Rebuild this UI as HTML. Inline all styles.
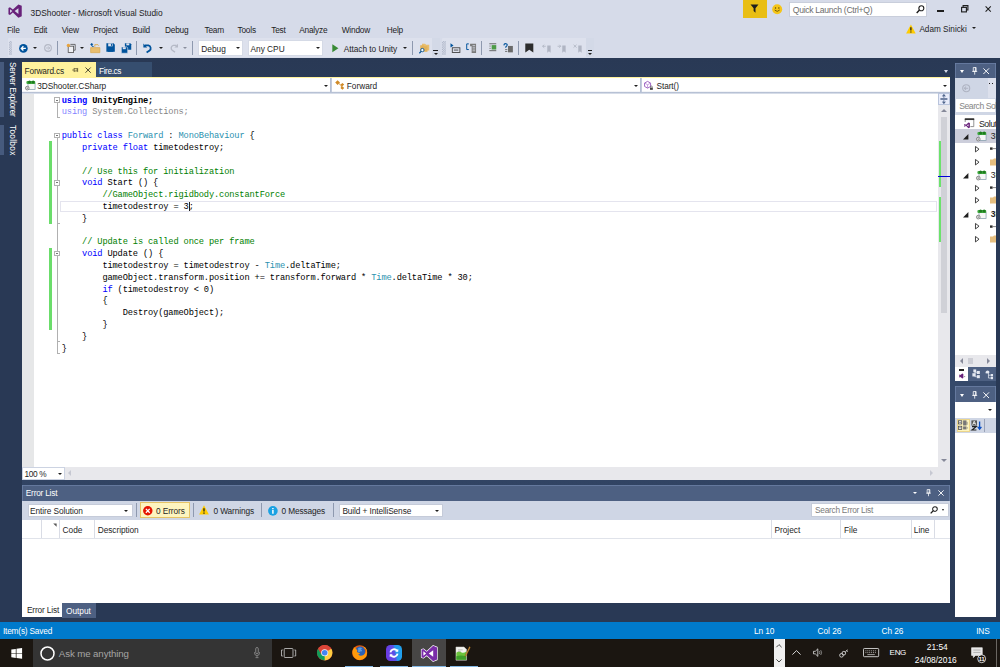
<!DOCTYPE html>
<html><head><meta charset="utf-8"><title>3DShooter - Microsoft Visual Studio</title>
<style>
*{box-sizing:border-box;margin:0;padding:0}
html,body{width:1000px;height:667px;overflow:hidden}
body{position:relative;background:#D6DBE9;font-family:"Liberation Sans",sans-serif;font-size:8.3px;color:#1e1e1e}
.a{position:absolute}
.t{position:absolute;white-space:pre;line-height:12px;height:12px}
.w{color:#fff}
.sep{position:absolute;width:0.9px;background:#8E99AF}
.dd{position:absolute;width:0;height:0;border-left:2.2px solid transparent;border-right:2.2px solid transparent;border-top:2.6px solid #1e1e1e}
svg{position:absolute;overflow:visible}
/* code */
.c{position:absolute;left:61.8px;white-space:pre;font-family:"Liberation Mono",monospace;font-size:8.7px;letter-spacing:-0.14px;height:11.81px;line-height:11.81px;color:#000}
.k{color:#0000ff}.y{color:#2b91af}.g{color:#008000}
.ob{position:absolute;left:54.2px;width:5.8px;height:5.8px;border:0.8px solid #b2b2b2;background:#fff}
.ob:after{content:"";position:absolute;left:0.8px;right:0.8px;top:1.7px;height:0.8px;background:#777}
.ol{position:absolute;background:#b0b0b0}
.gb{position:absolute;left:48.55px;width:3.6px;background:#6BDD6B}
.grip{width:3.6px;height:14px;background-image:linear-gradient(45deg,#a9b1c4 25%,transparent 25%,transparent 75%,#a9b1c4 75%),linear-gradient(45deg,#a9b1c4 25%,transparent 25%,transparent 75%,#a9b1c4 75%);background-size:1.8px 1.8px;background-position:0 0,0.9px 0.9px}
.vt{writing-mode:vertical-rl;height:auto;width:12px;line-height:12px;transform:translateX(-100%)}
.hs{top:520px;width:0.8px;height:18.4px;background:#D9DCE5}
.ul{top:665.5px;height:1.5px;background:#85B9E6}
</style></head><body>
<!-- TITLE BAR -->
<div id="title">
<svg class="a" style="left:8px;top:4.1px" width="14.2" height="14.2" viewBox="0 0 32 32"><path fill="#68217A" d="M23.5 1 L31 4.2 V27.8 L23.5 31 L11 19.4 L4.4 24.6 L1 23 V9 L4.4 7.4 L11 12.6 Z M23.5 9.6 L15 16 L23.5 22.4 Z M4.6 11.8 V20.2 L9.8 16 Z"/></svg>
<div class="t" style="left:30.6px;top:6.7px;font-size:8.35px">3DShooter - Microsoft Visual Studio</div>

<!-- title right -->
<div class="a" style="left:743px;top:0;width:23.8px;height:17.7px;background:#E9BE14"></div>
<svg style="left:750.4px;top:4.3px" width="9" height="9" viewBox="0 0 10 10"><path fill="#1e1e1e" d="M0.6 0.6 H9.4 L6.1 4.6 V9.6 L4 7.8 V4.6 Z"/></svg>
<svg style="left:771.7px;top:4.1px" width="10.4" height="10.4" viewBox="0 0 10 10"><circle cx="5" cy="5" r="4.8" fill="#F5C518"/><circle cx="3.4" cy="3.8" r="0.7" fill="#5b4a00"/><circle cx="6.6" cy="3.8" r="0.7" fill="#5b4a00"/><path d="M2.6 5.8 Q5 8.4 7.4 5.8" stroke="#5b4a00" stroke-width="0.8" fill="none"/></svg>
<div class="a" style="left:789.4px;top:2px;width:138px;height:15.2px;background:#fff;border:0.6px solid #C9CEDB"></div>
<div class="t" style="left:792.8px;top:3.9px;color:#6d6d6d;font-size:8.6px;letter-spacing:-0.3px">Quick Launch (Ctrl+Q)</div>
<svg style="left:915.6px;top:5.2px" width="8.6" height="8.6" viewBox="0 0 10 10"><circle cx="6.2" cy="3.8" r="2.9" stroke="#1e1e1e" stroke-width="1.3" fill="none"/><path d="M4.1 5.9 L0.8 9.2" stroke="#1e1e1e" stroke-width="1.7"/></svg>
<div class="a" style="left:937.4px;top:9.9px;width:6.6px;height:2.2px;background:#1e1e1e"></div>
<svg style="left:960.8px;top:5.3px" width="7.5" height="7.5" viewBox="0 0 10 10"><path d="M2.8 2.6 V0.8 H9.2 V6.6 H7.2" stroke="#1e1e1e" stroke-width="1.5" fill="none"/><rect x="0.8" y="3.2" width="6.4" height="6" stroke="#1e1e1e" stroke-width="1.5" fill="none"/></svg>
<svg style="left:985px;top:6.4px" width="6.4" height="6.2" viewBox="0 0 10 10"><path d="M0.8 0.8 L9.2 9.2 M9.2 0.8 L0.8 9.2" stroke="#1e1e1e" stroke-width="1.7"/></svg>
<!-- account -->
<svg style="left:905.8px;top:23.5px" width="9.8" height="10" viewBox="0 0 10 10"><path d="M5 0.3 L9.9 9.6 H0.1 Z" fill="#FFCC00"/><path d="M5 3.2 V6.6 M5 7.5 V8.7" stroke="#1e1e1e" stroke-width="1.3"/></svg>
<div class="t" style="left:919.4px;top:24.3px;font-size:8.2px">Adam Sinicki</div>
<div class="dd" style="left:972.3px;top:26.6px"></div>
<!-- MENU -->
<div class="t" style="left:7px;top:23.7px;letter-spacing:-0.2px">File</div>
<div class="t" style="left:33.7px;top:23.7px;letter-spacing:-0.2px">Edit</div>
<div class="t" style="left:61.7px;top:23.7px;letter-spacing:-0.2px">View</div>
<div class="t" style="left:93.3px;top:23.7px;letter-spacing:-0.2px">Project</div>
<div class="t" style="left:132.5px;top:23.7px;letter-spacing:-0.2px">Build</div>
<div class="t" style="left:165px;top:23.7px;letter-spacing:-0.2px">Debug</div>
<div class="t" style="left:204.5px;top:23.7px;letter-spacing:-0.2px">Team</div>
<div class="t" style="left:237.5px;top:23.7px;letter-spacing:-0.2px">Tools</div>
<div class="t" style="left:271.2px;top:23.7px;letter-spacing:-0.2px">Test</div>
<div class="t" style="left:299.2px;top:23.7px;letter-spacing:-0.2px">Analyze</div>
<div class="t" style="left:341.7px;top:23.7px;letter-spacing:-0.2px">Window</div>
<div class="t" style="left:386.7px;top:23.7px;letter-spacing:-0.2px">Help</div>
<!-- TOOLBAR -->
<div class="a" style="left:7.5px;top:38.4px;width:432px;height:18.8px;background:#DDE1ED;border-radius:1px"></div>
<div class="a" style="left:441.5px;top:38.4px;width:152.5px;height:18.8px;background:#DDE1ED;border-radius:1px"></div>
<div class="a grip" style="left:8.8px;top:40.6px"></div>
<div class="a grip" style="left:442.4px;top:40.6px"></div>

<!-- toolbar 1 icons -->
<svg style="left:19.4px;top:43.6px" width="8.8" height="8.8" viewBox="0 0 10 10"><circle cx="5" cy="5" r="4.9" fill="#00539C"/><path d="M7.8 5 H3 M5 2.6 L2.6 5 L5 7.4" stroke="#fff" stroke-width="1.5" fill="none"/></svg>
<div class="dd" style="left:33px;top:47px"></div>
<svg style="left:43.6px;top:44px" width="8" height="8" viewBox="0 0 10 10"><circle cx="5" cy="5" r="4.2" fill="none" stroke="#b5b9c6" stroke-width="1.4"/><path d="M2.6 5 H7 M5.2 3 L7.2 5 L5.2 7" stroke="#b5b9c6" stroke-width="1.2" fill="none"/></svg>
<div class="sep" style="left:57.3px;top:41px;height:14px"></div>
<svg style="left:65.5px;top:43px" width="10" height="10" viewBox="0 0 10 10"><rect x="2.2" y="3.2" width="5.4" height="6.2" fill="#f0f1f5" stroke="#505050" stroke-width="0.8"/><path d="M4.4 1.4 H9.2 V7.2 H7.8" stroke="#505050" stroke-width="0.8" fill="none"/><circle cx="2.4" cy="2.4" r="1.7" fill="#E8A33D"/></svg>
<div class="dd" style="left:80.4px;top:47px"></div>
<svg style="left:90px;top:43px" width="10.5" height="10.5" viewBox="0 0 10 10"><path d="M0.6 4.4 H9.4 V9.2 H0.6 Z" fill="#E9BE6E" stroke="#D9A441" stroke-width="0.6"/><path d="M4.6 3.6 V1.6 H7.6 L8.4 2.6" fill="none" stroke="#D9A441" stroke-width="0.8"/><path d="M3.4 3.4 Q1.2 3 1.6 1 M0.6 1.8 L1.6 0.6 L2.8 1.6" stroke="#00539C" stroke-width="1" fill="none"/></svg>
<svg style="left:105.6px;top:43.4px" width="9.2" height="9.2" viewBox="0 0 10 10"><path d="M0.4 0.4 H8.2 L9.6 1.8 V9.6 H0.4 Z" fill="#00539C"/><rect x="2.4" y="0.4" width="4.8" height="3.2" fill="#DDE1ED"/><rect x="5.4" y="0.9" width="1.1" height="2.2" fill="#00539C"/><rect x="2" y="5.6" width="6" height="4" fill="#00539C"/></svg>
<svg style="left:120.6px;top:43px" width="10.6" height="10.6" viewBox="0 0 12 12"><path d="M4.4 0.4 H10.6 L11.6 1.4 V7.6 H4.4 Z" fill="#00539C"/><rect x="6" y="0.4" width="3.4" height="2.2" fill="#DDE1ED"/><path d="M0.4 4.4 H6.6 L7.6 5.4 V11.6 H0.4 Z" fill="#00539C" stroke="#DDE1ED" stroke-width="0.7"/><rect x="2" y="4.8" width="3.4" height="2.2" fill="#DDE1ED"/></svg>
<div class="sep" style="left:136px;top:41px;height:14px"></div>
<svg style="left:143.4px;top:43px" width="10" height="10" viewBox="0 0 10 10"><path d="M2 2.4 H5.4 A3 3 0 0 1 6.6 7.6 L3.6 9.6" stroke="#00539C" stroke-width="1.8" fill="none"/><path d="M0.4 0.6 V4.6 H4.2 Z" fill="#00539C"/></svg>
<div class="dd" style="left:158.6px;top:47px"></div>
<svg style="left:168.6px;top:43.2px" width="9.4" height="9.6" viewBox="0 0 10 10"><path d="M8 2.4 H4.6 A3 3 0 0 0 3.4 7.6 L6.4 9.6" stroke="#b5b9c6" stroke-width="1.5" fill="none"/><path d="M9.6 0.6 V4.6 H5.8 Z" fill="#b5b9c6"/></svg>
<div class="dd" style="left:182.8px;top:47px;border-top-color:#8a8f9d"></div>
<div class="sep" style="left:192.3px;top:41px;height:14px"></div>
<div class="a" style="left:198.3px;top:40.2px;width:44.6px;height:15.5px;background:#fff;border:0.6px solid #D5DAE6"></div>
<div class="t" style="left:201.3px;top:42.9px">Debug</div>
<div class="dd" style="left:235.8px;top:47px"></div>
<div class="a" style="left:248.3px;top:40.2px;width:75px;height:15.5px;background:#fff;border:0.6px solid #D5DAE6"></div>
<div class="t" style="left:250.5px;top:42.9px">Any CPU</div>
<div class="dd" style="left:316px;top:47px"></div>
<svg style="left:331.6px;top:43.6px" width="6.6" height="8.4" viewBox="0 0 8 10"><path d="M0.4 0.2 L7.8 5 L0.4 9.8 Z" fill="#388A34"/></svg>
<div class="t" style="left:343.7px;top:42.9px;letter-spacing:-0.03px">Attach to Unity</div>
<div class="dd" style="left:403.3px;top:47px"></div>
<div class="sep" style="left:411.8px;top:41px;height:14px"></div>
<svg style="left:418.6px;top:43px" width="10.6" height="10.6" viewBox="0 0 12 12"><path d="M3.4 0.8 H7 L8 2 H11.6 V8.4 H3.4 Z" fill="#E9BE6E"/><path d="M1.4 2.6 H5 L6 3.8 H9.6 V10 H1.4 Z" fill="#E2B25A"/><circle cx="3.8" cy="8" r="1.9" fill="#fff" stroke="#00539C" stroke-width="1"/><path d="M2.4 9.4 L0.4 11.6" stroke="#00539C" stroke-width="1.3"/></svg>
<div class="a" style="left:432px;top:38.4px;width:7.5px;height:18.8px;background:#D3D9E7"></div><div class="a" style="left:433.3px;top:50.3px;width:4.8px;height:1.1px;background:#1e1e1e"></div><div class="dd" style="left:433.5px;top:52.6px"></div>
<!-- toolbar 2 icons -->
<svg style="left:450px;top:43px" width="10.6" height="10.6" viewBox="0 0 12 12"><path d="M0.6 0.4 V5 L4 2.8 Z" fill="#00539C"/><rect x="2.6" y="5.4" width="8.6" height="5.4" fill="none" stroke="#424242" stroke-width="1"/><path d="M4.4 8 H9.4" stroke="#424242" stroke-width="1"/></svg>
<svg style="left:465.6px;top:43px" width="10.6" height="10.6" viewBox="0 0 12 12"><path d="M3.2 1 H0.8 V7.4 H3.2" fill="none" stroke="#00539C" stroke-width="1.1"/><path d="M4.6 0.8 H11.4 V11.2 H6.4 V3.6 H4.6 Z" fill="#7a7a7a"/><path d="M7.4 2.8 H10.4 M7.4 4.8 H10.4 M7.4 6.8 H10.4 M7.4 8.8 H10.4" stroke="#DDE1ED" stroke-width="0.8"/></svg>
<div class="sep" style="left:481px;top:41px;height:14px"></div>
<svg style="left:488.2px;top:43.4px" width="9.6" height="9.6" viewBox="0 0 10 10"><path d="M1.4 0.8 H8.6 M1.4 8 H8.6" stroke="#555" stroke-width="0.9"/><rect x="3.8" y="2.2" width="4.8" height="4.6" fill="#4C9A46"/><path d="M1.4 3.2 H3 M1.4 5.6 H3" stroke="#777" stroke-width="0.8"/></svg>
<svg style="left:503.4px;top:43px" width="10.4" height="10.4" viewBox="0 0 12 12"><path d="M1 2.8 Q1.2 0.6 3.4 0.8 Q5.4 1.2 4.6 3 L3.2 4.6 V5.6" stroke="#00539C" stroke-width="1.3" fill="none"/><rect x="5.8" y="3.4" width="5.6" height="7.4" fill="#6a6a6a"/><path d="M2.4 7.6 H5 M2.4 9.8 H5" stroke="#6a6a6a" stroke-width="1"/></svg>
<div class="sep" style="left:518px;top:41px;height:14px"></div>
<svg style="left:524.8px;top:43.2px" width="8.6" height="9.8" viewBox="0 0 9 10"><path d="M0.3 0.3 H8.7 V9.7 L4.5 7 L0.3 9.7 Z" fill="#2d2d2d"/></svg>
<svg class="gic" style="left:541.6px;top:43.6px" width="9.4" height="9.4" viewBox="0 0 10 10"><path d="M0.6 2.4 H4 M2.4 0.8 L0.6 2.4 L2.4 4" stroke="#b0b5c3" stroke-width="0.9" fill="none"/><path d="M5.6 1.6 V9.2 L7.4 7.8 L9.2 9.2 V1.6 Z" fill="#b0b5c3"/></svg>
<svg class="gic" style="left:557.4px;top:43.6px" width="9.4" height="9.4" viewBox="0 0 10 10"><path d="M0.6 2.4 H4 M2.4 0.8 L4 2.4 L2.4 4" stroke="#b0b5c3" stroke-width="0.9" fill="none"/><path d="M5.6 1.6 V9.2 L7.4 7.8 L9.2 9.2 V1.6 Z" fill="#b0b5c3"/></svg>
<svg class="gic" style="left:573px;top:43.6px" width="9.4" height="9.4" viewBox="0 0 10 10"><path d="M0.6 0.8 L3.8 3.8 M3.8 0.8 L0.6 3.8" stroke="#b0b5c3" stroke-width="0.9" fill="none"/><path d="M5.6 1.6 V9.2 L7.4 7.8 L9.2 9.2 V1.6 Z" fill="#b0b5c3"/></svg>
<div class="a" style="left:586.4px;top:38.4px;width:7.6px;height:18.8px;background:#D3D9E7"></div><div class="a" style="left:587.7px;top:50.3px;width:4.8px;height:1.1px;background:#1e1e1e"></div><div class="dd" style="left:587.9px;top:52.6px"></div>
</div>

<!-- NAVY FRAME -->
<div class="a" style="left:0;top:58px;width:1000px;height:564px;background:linear-gradient(#293955 0%,#2B3C59 10%,#35496A 42%,#35496A 64%,#293955 97%)"></div>
<div class="a" style="left:0;top:58px;width:22px;height:564px;background:#293955"></div>
<div class="a" style="left:995.5px;top:58px;width:4.5px;height:564px;background:#293955"></div>
<!-- left autohide strip -->
<div class="a" style="left:0;top:62.3px;width:4.2px;height:55.2px;background:#465A7D"></div>
<div class="a" style="left:0;top:125.4px;width:4.2px;height:29.4px;background:#465A7D"></div>
<div class="t w vt" style="left:18.8px;top:62px;letter-spacing:-0.2px">Server Explorer</div>
<div class="t w vt" style="left:18.8px;top:124.8px;letter-spacing:0.28px">Toolbox</div>
<!-- doc tabs -->
<div class="a" style="left:22px;top:62.4px;width:74px;height:15px;background:#FFF29D"></div>
<div class="t" style="left:24.6px;top:64.9px;letter-spacing:-0.17px">Forward.cs</div>
<svg style="left:71.6px;top:67.4px" width="6" height="6" viewBox="0 0 10 10"><path d="M0.4 5 H3.6 M3.6 1.6 V8.4 M3.6 2.8 H8.6 V6.6 H3.6 M9.4 1.6 V8.4" stroke="#5a5330" stroke-width="1.3" fill="none"/></svg>
<svg style="left:84.6px;top:67.2px" width="6.2" height="6.2" viewBox="0 0 10 10"><path d="M0.8 0.8 L9.2 9.2 M9.2 0.8 L0.8 9.2" stroke="#3b3b2a" stroke-width="1.5"/></svg>
<div class="a" style="left:96px;top:62.4px;width:56.4px;height:14.4px;background:#364E6F"></div>
<div class="t w" style="left:99px;top:64.9px;letter-spacing:-0.4px">Fire.cs</div>
<div class="a" style="left:22px;top:76.5px;width:928.2px;height:1.7px;background:#FFF29D"></div>
<div class="dd" style="left:944.2px;top:70.4px;border-top-color:#D6DBE9;border-left-width:2.6px;border-right-width:2.6px;border-top-width:3px"></div>
<!-- nav bar -->
<div class="a" style="left:22px;top:78.2px;width:928.2px;height:15.9px;background:linear-gradient(#fff 0,#fff 13.4px,#B4BED2 14px,#B9C3D6 14.8px,#E6EAF2 15.9px)"></div>
<div class="a" style="left:330px;top:78.2px;width:2.2px;height:13.6px;background:linear-gradient(90deg,#AEB9CF,#C9D1E1)"></div>
<div class="a" style="left:639.9px;top:78.2px;width:2.2px;height:13.6px;background:linear-gradient(90deg,#AEB9CF,#C9D1E1)"></div>
<svg style="left:24.6px;top:80px" width="10.6" height="10.6" viewBox="0 0 12 12"><rect x="3.4" y="4" width="8" height="6.6" fill="#f7f7f7" stroke="#7f9aa8" stroke-width="0.8"/><rect x="1.6" y="1" width="10" height="3.6" rx="1.2" fill="#3DA83D"/><circle cx="5.2" cy="2.2" r="1.7" fill="#1F7A1F"/><circle cx="9.2" cy="2.2" r="1.7" fill="#1F7A1F"/><circle cx="2.6" cy="9.2" r="2.1" fill="#e4e4e4" stroke="#6a6a6a" stroke-width="0.8"/><circle cx="2.6" cy="9.2" r="0.7" fill="#6a6a6a"/></svg>
<div class="t" style="left:37.2px;top:79.8px;letter-spacing:-0.04px">3DShooter.CSharp</div>
<div class="dd" style="left:324.3px;top:84.6px"></div>
<svg style="left:335px;top:80.4px" width="10" height="10" viewBox="0 0 10 10"><path d="M0.2 2.6 L2.6 0.2 L5 2.6 L2.6 5 Z" fill="#D08A28"/><path d="M4 3.6 L6.2 5.6 M6.4 5 V8.6" stroke="#D08A28" stroke-width="0.9" fill="none"/><path d="M5.6 4.6 L7.4 2.9 L9.2 4.6 L7.4 6.3 Z M5.6 8 L7.4 6.3 L9.2 8 L7.4 9.7 Z" fill="#D08A28"/></svg>
<div class="t" style="left:346.8px;top:79.8px">Forward</div>
<div class="dd" style="left:633.6px;top:84.6px"></div>
<svg style="left:644.4px;top:80.6px" width="9.4" height="9.4" viewBox="0 0 10 10"><path d="M3.8 0.4 L7 2.2 V5.8 L3.8 7.6 L0.6 5.8 V2.2 Z" fill="none" stroke="#9457BD" stroke-width="0.95"/><path d="M0.8 2.2 L3.8 4 L7 2.2 M3.8 4 V7.4" stroke="#A970CC" stroke-width="0.7" fill="none"/><rect x="6.4" y="7" width="3" height="2.4" fill="#444"/><path d="M7 7 V6.2 A0.9 0.9 0 0 1 8.8 6.2 V7" stroke="#444" stroke-width="0.6" fill="none"/></svg>
<div class="t" style="left:656.5px;top:79.8px;letter-spacing:-0.1px">Start()</div>
<div class="dd" style="left:942.8px;top:84.6px"></div>
<!-- EDITOR -->
<div class="a" style="left:22px;top:94.1px;width:916.4px;height:373.1px;background:#fff"></div>
<div class="a" style="left:22px;top:94.1px;width:12.2px;height:373.1px;background:#E6E7E8"></div>
<!-- CODE -->
<div class="a" style="left:60.2px;top:200.5px;width:876.6px;height:11.3px;border:1px solid #E4E4EE"></div>
<div class="c" style="top:95.66px"><b><span class="k">using</span> UnityEngine;</b></div>
<div class="c" style="top:107.47px"><span style="opacity:.5"><span class="k">using</span> System.Collections;</span></div>
<div class="c" style="top:131.09px"><span class="k">public</span> <span class="k">class</span> <span class="y">Forward</span> : <span class="y">MonoBehaviour</span> {</div>
<div class="c" style="top:142.90px">    <span class="k">private</span> <span class="k">float</span> timetodestroy;</div>
<div class="c" style="top:166.52px">    <span class="g">// Use this for initialization</span></div>
<div class="c" style="top:178.33px">    <span class="k">void</span> Start () {</div>
<div class="c" style="top:190.14px">        <span class="g">//GameObject.rigidbody.constantForce</span></div>
<div class="c" style="top:201.95px">        timetodestroy = 3;</div>
<div class="c" style="top:213.76px">    }</div>
<div class="c" style="top:237.38px">    <span class="g">// Update is called once per frame</span></div>
<div class="c" style="top:249.19px">    <span class="k">void</span> Update () {</div>
<div class="c" style="top:261.00px">        timetodestroy = timetodestroy - <span class="y">Time</span>.deltaTime;</div>
<div class="c" style="top:272.81px">        gameObject.transform.position += transform.forward * <span class="y">Time</span>.deltaTime * 30;</div>
<div class="c" style="top:284.62px">        <span class="k">if</span> (timetodestroy &lt; 0)</div>
<div class="c" style="top:296.43px">        {</div>
<div class="c" style="top:308.24px">            Destroy(gameObject);</div>
<div class="c" style="top:320.05px">        }</div>
<div class="c" style="top:331.86px">    }</div>
<div class="c" style="top:343.67px">}</div>
<div class="ol" style="left:57px;top:102.90px;width:0.8px;height:14.51px"></div><div class="ol" style="left:57px;top:116.61px;width:3.2px;height:0.8px"></div>
<div class="ol" style="left:57px;top:138.33px;width:0.8px;height:215.27px"></div><div class="ol" style="left:57px;top:352.80px;width:3.2px;height:0.8px"></div>
<div class="ol" style="left:57px;top:222.80px;width:3.2px;height:0.8px"></div>
<div class="ol" style="left:57px;top:341.00px;width:3.2px;height:0.8px"></div>
<div class="ob" style="top:97.10px"></div>
<div class="ob" style="top:132.53px"></div>
<div class="ob" style="top:179.77px"></div>
<div class="ob" style="top:250.63px"></div>
<div class="gb" style="top:141.3px;height:82.40px"></div>
<div class="gb" style="top:247.5px;height:82.20px"></div>
<div class="a" style="left:188.7px;top:201.8px;width:0.8px;height:8.8px;background:#222"></div>
<!-- /CODE -->
<!-- editor v scrollbar -->
<div class="a" style="left:938.4px;top:93.3px;width:11.8px;height:373.9px;background:#E8E8EC"></div>
<div class="a" style="left:938.4px;top:93.3px;width:11.8px;height:12.2px;background:#E8ECFA;border:0.6px solid #B9C4DC"></div>
<svg style="left:940.4px;top:94.4px" width="7.8" height="10" viewBox="0 0 8 10"><path d="M0.4 5 H7.6" stroke="#1F3A68" stroke-width="1.2"/><path d="M4 0.6 V3.6 M2.4 2 L4 0.6 L5.6 2 M4 9.4 V6.4 M2.4 8 L4 9.4 L5.6 8" stroke="#1F3A68" stroke-width="0.9" fill="none"/></svg>
<div class="a" style="left:940.7px;top:109.4px;width:0;height:0;border-left:3.1px solid transparent;border-right:3.1px solid transparent;border-bottom:3.5px solid #868999"></div>
<div class="a" style="left:940.7px;top:459.3px;width:0;height:0;border-left:3.1px solid transparent;border-right:3.1px solid transparent;border-top:3.5px solid #868999"></div>
<div class="a" style="left:941.2px;top:117px;width:5.8px;height:195.6px;background:#D0D1D7"></div>
<div class="a" style="left:938.5px;top:141px;width:2.8px;height:45.5px;background:#6CE26C"></div>
<div class="a" style="left:938.5px;top:197.2px;width:2.8px;height:45px;background:#6CE26C"></div>
<div class="a" style="left:937.6px;top:176.1px;width:12.6px;height:1px;background:#0000D8"></div>
<!-- editor bottom bar -->
<div class="a" style="left:22px;top:467.2px;width:928.2px;height:12.4px;background:#E8E8EC"></div>
<div class="a" style="left:22px;top:467.2px;width:42.8px;height:12.4px;background:#fff;border:0.6px solid #CCD3E2"></div>
<div class="t" style="left:24.4px;top:467.6px;letter-spacing:-0.3px">100 %</div>
<div class="dd" style="left:58px;top:472.6px"></div>
<div class="a" style="left:68.2px;top:470px;width:0;height:0;border-top:3.3px solid transparent;border-bottom:3.3px solid transparent;border-right:3.6px solid #C6C8D2"></div>
<div class="a" style="left:930px;top:470px;width:0;height:0;border-top:3.3px solid transparent;border-bottom:3.3px solid transparent;border-left:3.6px solid #C6C8D2"></div>

<!-- SOLUTION EXPLORER -->
<div class="a" style="left:955px;top:62.8px;width:40.5px;height:318.6px;background:#fff;overflow:hidden" id="se"></div>
<div class="a" style="left:955px;top:62.8px;width:40.5px;height:15.6px;background:#4D6082;box-shadow:inset 0.8px 0.8px 0 #6C80A6,inset -0.8px 0 0 #6C80A6"></div>
<div class="a" style="left:959.7px;top:69.6px;width:0;height:0;border-left:2.8px solid transparent;border-right:2.8px solid transparent;border-top:3px solid #fff"></div>
<svg style="left:971.6px;top:66.8px" width="5.4" height="8" viewBox="0 0 6 9"><path d="M1.4 0.6 H4.6 V4.8 H1.4 Z M3.8 0.6 V4.8 M0.2 5 H5.8 M3 5 V8.6" stroke="#fff" stroke-width="0.9" fill="none"/></svg>
<svg style="left:983.4px;top:67.6px" width="6.4" height="6.4" viewBox="0 0 10 10"><path d="M0.6 0.6 L9.4 9.4 M9.4 0.6 L0.6 9.4" stroke="#fff" stroke-width="1.5"/></svg>
<div class="a" style="left:955px;top:78.4px;width:40.5px;height:36.6px;background:#CFD6E5"></div>
<div class="a" style="left:988px;top:78.4px;width:8px;height:19.2px;background:#DCE0EC"></div>
<svg style="left:962px;top:84.2px" width="8.4" height="8.4" viewBox="0 0 10 10"><circle cx="5" cy="5" r="4.2" fill="none" stroke="#aeb3c2" stroke-width="1.3"/><path d="M7.4 5 H3 M4.8 3 L2.8 5 L4.8 7" stroke="#aeb3c2" stroke-width="1.2" fill="none"/></svg>
<div class="a" style="left:989.2px;top:82.8px;width:1.3px;height:1.3px;background:#1e1e1e"></div><div class="a" style="left:991.8px;top:82.8px;width:1.3px;height:1.3px;background:#1e1e1e"></div>
<div class="a" style="left:956px;top:98.9px;width:38.8px;height:13.2px;background:#fff"></div>
<div class="a" style="left:956.2px;top:98.8px;width:39.8px;height:13.8px;overflow:hidden"><div class="t" style="left:3px;top:0.9px;color:#858585;font-size:8.6px;letter-spacing:-0.45px">Search Solution Explorer</div></div>
<svg style="left:964.2px;top:118.2px" width="10.4" height="10.4" viewBox="0 0 10.4 10.4"><path d="M1.2 4 V0.9 H9.8 V8.6 H6.4" fill="none" stroke="#777" stroke-width="0.8"/><path d="M0.8 1.2 H10.2" stroke="#333" stroke-width="1.7"/><g transform="translate(0,4.3) scale(0.19)"><path fill="#68217A" d="M23.5 1 L31 4.2 V27.8 L23.5 31 L10.5 18.6 L4 23.6 L1 22.2 V9.8 L4 8.4 L10.5 13.4 Z M23.5 10.2 L15.6 16 L23.5 21.8 Z M4 12.6 V19.4 L7.6 16 Z"/></g></svg>
<div class="a" style="left:955px;top:118px;width:40.5px;height:12px;overflow:hidden"><div class="t" style="left:23.9px;top:-0.3px;font-size:8.8px;letter-spacing:-0.45px">Solution</div></div>
<div class="a" style="left:955px;top:129.4px;width:40.5px;height:13.2px;background:#CCCEDB"></div>
<div class="a" style="left:955px;top:125px;width:40.5px;height:125px;overflow:hidden"><div class="a" style="left:-955px;top:-125px;width:1000px;height:300px"><svg style="left:962.8px;top:133.6px" width="5.4" height="5.4" viewBox="0 0 5 5"><path d="M5 0 V5 H0 Z" fill="#1e1e1e"/></svg><svg style="left:976.4px;top:130.6px" width="10.6" height="10.6" viewBox="0 0 12 12"><rect x="3.4" y="4" width="8" height="6.6" fill="#f7f7f7" stroke="#7f9aa8" stroke-width="0.8"/><rect x="1.6" y="1" width="10" height="3.6" rx="1.2" fill="#3DA83D"/><circle cx="5.2" cy="2.2" r="1.7" fill="#1F7A1F"/><circle cx="9.2" cy="2.2" r="1.7" fill="#1F7A1F"/><circle cx="2.6" cy="9.2" r="2.1" fill="#e4e4e4" stroke="#6a6a6a" stroke-width="0.8"/><circle cx="2.6" cy="9.2" r="0.7" fill="#6a6a6a"/></svg><div class="t" style="left:990.8px;top:130.2px;font-size:8.6px">3DShooter</div><svg style="left:975.4px;top:145.60000000000002px" width="4.6" height="6.4" viewBox="0 0 5 7"><path d="M0.5 0.5 L4.4 3.5 L0.5 6.5 Z" fill="#fff" stroke="#2a2a2a" stroke-width="0.95"/></svg><svg style="left:989.6px;top:147.20000000000002px" width="6" height="3.2" viewBox="0 0 6 3.2"><rect x="0" y="0.4" width="2.6" height="2.4" fill="#2d2d2d"/><path d="M2.6 1.6 H6" stroke="#666" stroke-width="0.8"/></svg><svg style="left:975.4px;top:158.60000000000002px" width="4.6" height="6.4" viewBox="0 0 5 7"><path d="M0.5 0.5 L4.4 3.5 L0.5 6.5 Z" fill="#fff" stroke="#2a2a2a" stroke-width="0.95"/></svg><svg style="left:990px;top:157.8px" width="6" height="8" viewBox="0 0 6 8"><path d="M0 1.6 H3 L4 0.4 H6 V7.6 H0 Z" fill="#E5BE7F"/></svg><svg style="left:962.8px;top:172.6px" width="5.4" height="5.4" viewBox="0 0 5 5"><path d="M5 0 V5 H0 Z" fill="#1e1e1e"/></svg><svg style="left:976.4px;top:169.6px" width="10.6" height="10.6" viewBox="0 0 12 12"><rect x="3.4" y="4" width="8" height="6.6" fill="#f7f7f7" stroke="#7f9aa8" stroke-width="0.8"/><rect x="1.6" y="1" width="10" height="3.6" rx="1.2" fill="#3DA83D"/><circle cx="5.2" cy="2.2" r="1.7" fill="#1F7A1F"/><circle cx="9.2" cy="2.2" r="1.7" fill="#1F7A1F"/><circle cx="2.6" cy="9.2" r="2.1" fill="#e4e4e4" stroke="#6a6a6a" stroke-width="0.8"/><circle cx="2.6" cy="9.2" r="0.7" fill="#6a6a6a"/></svg><div class="t" style="left:990.8px;top:169.2px;font-size:8.6px">3DShooter</div><svg style="left:975.4px;top:184.60000000000002px" width="4.6" height="6.4" viewBox="0 0 5 7"><path d="M0.5 0.5 L4.4 3.5 L0.5 6.5 Z" fill="#fff" stroke="#2a2a2a" stroke-width="0.95"/></svg><svg style="left:989.6px;top:186.20000000000002px" width="6" height="3.2" viewBox="0 0 6 3.2"><rect x="0" y="0.4" width="2.6" height="2.4" fill="#2d2d2d"/><path d="M2.6 1.6 H6" stroke="#666" stroke-width="0.8"/></svg><svg style="left:975.4px;top:197.20000000000002px" width="4.6" height="6.4" viewBox="0 0 5 7"><path d="M0.5 0.5 L4.4 3.5 L0.5 6.5 Z" fill="#fff" stroke="#2a2a2a" stroke-width="0.95"/></svg><svg style="left:990px;top:196.4px" width="6" height="8" viewBox="0 0 6 8"><path d="M0 1.6 H3 L4 0.4 H6 V7.6 H0 Z" fill="#E5BE7F"/></svg><svg style="left:962.8px;top:211.6px" width="5.4" height="5.4" viewBox="0 0 5 5"><path d="M5 0 V5 H0 Z" fill="#1e1e1e"/></svg><svg style="left:976.4px;top:208.6px" width="10.6" height="10.6" viewBox="0 0 12 12"><rect x="3.4" y="4" width="8" height="6.6" fill="#f7f7f7" stroke="#7f9aa8" stroke-width="0.8"/><rect x="1.6" y="1" width="10" height="3.6" rx="1.2" fill="#3DA83D"/><circle cx="5.2" cy="2.2" r="1.7" fill="#1F7A1F"/><circle cx="9.2" cy="2.2" r="1.7" fill="#1F7A1F"/><circle cx="2.6" cy="9.2" r="2.1" fill="#e4e4e4" stroke="#6a6a6a" stroke-width="0.8"/><circle cx="2.6" cy="9.2" r="0.7" fill="#6a6a6a"/></svg><div class="t" style="left:990.8px;top:208.2px;font-weight:bold;font-size:8.6px">3DShooter</div><svg style="left:975.4px;top:223.4px" width="4.6" height="6.4" viewBox="0 0 5 7"><path d="M0.5 0.5 L4.4 3.5 L0.5 6.5 Z" fill="#fff" stroke="#2a2a2a" stroke-width="0.95"/></svg><svg style="left:989.6px;top:225.0px" width="6" height="3.2" viewBox="0 0 6 3.2"><rect x="0" y="0.4" width="2.6" height="2.4" fill="#2d2d2d"/><path d="M2.6 1.6 H6" stroke="#666" stroke-width="0.8"/></svg><svg style="left:975.4px;top:236.20000000000002px" width="4.6" height="6.4" viewBox="0 0 5 7"><path d="M0.5 0.5 L4.4 3.5 L0.5 6.5 Z" fill="#fff" stroke="#2a2a2a" stroke-width="0.95"/></svg><svg style="left:990px;top:235.4px" width="6" height="8" viewBox="0 0 6 8"><path d="M0 1.6 H3 L4 0.4 H6 V7.6 H0 Z" fill="#E5BE7F"/></svg></div></div>
<!-- h scrollbar -->
<div class="a" style="left:955px;top:355px;width:40.5px;height:12px;background:#E8E8EC"></div>
<div class="a" style="left:960px;top:358px;width:0;height:0;border-top:3px solid transparent;border-bottom:3px solid transparent;border-right:3.2px solid #868999"></div>
<div class="a" style="left:987.2px;top:358px;width:0;height:0;border-top:3px solid transparent;border-bottom:3px solid transparent;border-left:3.2px solid #868999"></div>
<div class="a" style="left:968.2px;top:357.8px;width:4.8px;height:6.2px;background:#CDCED5"></div>
<!-- bottom tabs -->
<div class="a" style="left:955px;top:367px;width:40.5px;height:14.4px;background:#4D6082"></div>
<div class="a" style="left:955px;top:367px;width:13.2px;height:14.4px;background:#fff"></div>
<div class="a" style="left:959.2px;top:369.4px;width:5.2px;height:1.8px;background:#222"></div>
<svg style="left:958.8px;top:373.4px" width="6.6" height="6" viewBox="0 0 7 6"><path d="M3.4 0.4 L4.6 1 V5 L3.4 5.6 L1.6 4 L0.8 4.6 L0.3 4.4 V1.6 L0.8 1.4 L1.6 2 Z" fill="#68217A"/><path d="M5.2 3.6 H6.6" stroke="#666" stroke-width="0.7"/></svg>
<svg style="left:971.6px;top:369.4px" width="8.6" height="9.6" viewBox="0 0 9 10"><rect x="1.4" y="0.4" width="3" height="3" fill="#e4e8f1"/><rect x="0.4" y="4.4" width="3.4" height="3.4" fill="#e4e8f1"/><rect x="5" y="2" width="3.2" height="3.2" fill="#e4e8f1"/><rect x="5" y="6.4" width="3.2" height="3.2" fill="#e4e8f1"/><path d="M3 3 V8 H5 M3 3.6 H5" stroke="#e4e8f1" stroke-width="0.7" fill="none"/></svg>
<svg style="left:985px;top:369.8px" width="8.6" height="9.6" viewBox="0 0 9 10"><path d="M0.6 3.4 Q0.4 0.6 3 0.6 Q5 0.8 4.6 3 L2.4 3.6 Z" fill="#e4e8f1"/><path d="M3.6 3 V8.4 H6 M3.6 5.4 H6" stroke="#e4e8f1" stroke-width="0.8" fill="none"/><rect x="6" y="4.2" width="2.4" height="2.4" fill="#e4e8f1"/><rect x="6" y="7.2" width="2.4" height="2.4" fill="#e4e8f1"/></svg>
<!-- PROPERTIES -->
<div class="a" style="left:955px;top:386.2px;width:40.5px;height:231.2px;background:#fff"></div>
<div class="a" style="left:955px;top:386.2px;width:40.5px;height:16.2px;background:#4D6082;box-shadow:inset 0.8px 0.8px 0 #6C80A6,inset -0.8px 0 0 #6C80A6"></div>
<div class="a" style="left:959.7px;top:393.6px;width:0;height:0;border-left:2.8px solid transparent;border-right:2.8px solid transparent;border-top:3px solid #fff"></div>
<svg style="left:971.6px;top:390.8px" width="5.4" height="8" viewBox="0 0 6 9"><path d="M1.4 0.6 H4.6 V4.8 H1.4 Z M3.8 0.6 V4.8 M0.2 5 H5.8 M3 5 V8.6" stroke="#fff" stroke-width="0.9" fill="none"/></svg>
<svg style="left:983.4px;top:391.6px" width="6.4" height="6.4" viewBox="0 0 10 10"><path d="M0.6 0.6 L9.4 9.4 M9.4 0.6 L0.6 9.4" stroke="#fff" stroke-width="1.5"/></svg>
<div class="dd" style="left:988.2px;top:409.4px"></div>
<div class="a" style="left:955px;top:418px;width:40.5px;height:15px;background:#CFD6E5"></div>
<div class="a" style="left:956.8px;top:418.6px;width:13.2px;height:13.8px;background:#FDF4BF;border:0.7px solid #EBD58B"></div>
<svg style="left:958.4px;top:420.4px" width="10.4" height="10.4" viewBox="0 0 11 11"><rect x="0.6" y="0.8" width="3.4" height="3.4" fill="#fff" stroke="#444" stroke-width="0.8"/><rect x="0.6" y="6.6" width="3.4" height="3.4" fill="#fff" stroke="#444" stroke-width="0.8"/><path d="M1.2 2.5 H3.4 M1.2 8.3 H3.4" stroke="#444" stroke-width="0.7"/><rect x="5.4" y="0.4" width="3.6" height="5.4" fill="#777"/><rect x="5.4" y="6.8" width="3.6" height="3.2" fill="#777"/><path d="M9.6 2 V5 M9.6 8.4 H10.6" stroke="#777" stroke-width="0.8"/></svg>
<svg style="left:971.2px;top:420.2px" width="11" height="11" viewBox="0 0 11 11"><rect x="0.4" y="0.4" width="5.6" height="5.2" fill="#555"/><path d="M1.6 4.8 L3.2 1.2 L4.8 4.8 M2.2 3.6 H4.2" stroke="#fff" stroke-width="0.8" fill="none"/><path d="M1 6.6 H5.2 L1 10 H5.4" stroke="#222" stroke-width="1.2" fill="none"/><path d="M8.6 1.6 V9 M6.8 6.8 L8.6 9.2 L10.4 6.8" stroke="#0B4FC2" stroke-width="1.3" fill="none"/></svg>
<div class="sep" style="left:984.2px;top:419.4px;height:12.6px;background:#9aa3b8"></div>

<!-- ERROR LIST -->
<div class="a" style="left:22px;top:485px;width:927.8px;height:118.2px;background:#fff"></div>
<div class="a" style="left:22px;top:485px;width:927.8px;height:15.6px;background:#4D6082;box-shadow:inset 0.8px 0.8px 0 #6C80A6,inset -0.8px 0 0 #6C80A6"></div>
<div class="t w" style="left:25.8px;top:486.8px;letter-spacing:-0.22px">Error List</div>
<div class="a" style="left:913px;top:492px;width:0;height:0;border-left:2.7px solid transparent;border-right:2.7px solid transparent;border-top:2.9px solid #fff"></div>
<svg style="left:926px;top:488.8px" width="5" height="7.6" viewBox="0 0 6 9"><path d="M1.4 0.6 H4.6 V4.8 H1.4 Z M3.8 0.6 V4.8 M0.2 5 H5.8 M3 5 V8.6" stroke="#fff" stroke-width="0.9" fill="none"/></svg>
<svg style="left:938px;top:489.8px" width="6" height="6" viewBox="0 0 10 10"><path d="M0.6 0.6 L9.4 9.4 M9.4 0.6 L0.6 9.4" stroke="#fff" stroke-width="1.5"/></svg>
<div class="a" style="left:22px;top:500.6px;width:927.8px;height:19.2px;background:#CFD6E5"></div>
<div class="a" style="left:27.5px;top:504px;width:105px;height:13.4px;background:#fff;border:0.6px solid #C5CBD9"></div>
<div class="t" style="left:30px;top:504.8px;letter-spacing:-0.07px">Entire Solution</div>
<div class="dd" style="left:123.8px;top:509.8px"></div>
<div class="sep" style="left:136px;top:503.4px;height:14px"></div>
<div class="a" style="left:140px;top:502.4px;width:50px;height:15.4px;background:#FDF4BF;border:0.8px solid #E5C365"></div>
<svg style="left:142.8px;top:505.8px" width="9.6" height="9.6" viewBox="0 0 10 10"><circle cx="5" cy="5" r="4.9" fill="#E51400"/><path d="M3 3 L7 7 M7 3 L3 7" stroke="#fff" stroke-width="1.4"/></svg>
<div class="t" style="left:156px;top:504.8px;letter-spacing:-0.1px">0 Errors</div>
<div class="sep" style="left:192.6px;top:503.4px;height:14px"></div>
<svg style="left:199.2px;top:505.2px" width="10" height="10" viewBox="0 0 10 10"><path d="M5 0.3 L9.9 9.6 H0.1 Z" fill="#FFCC00"/><path d="M5 3.2 V6.6 M5 7.5 V8.7" stroke="#1e1e1e" stroke-width="1.3"/></svg>
<div class="t" style="left:213.5px;top:504.8px;letter-spacing:-0.12px">0 Warnings</div>
<div class="sep" style="left:261.4px;top:503.4px;height:14px"></div>
<svg style="left:268.4px;top:505.6px" width="9.8" height="9.8" viewBox="0 0 10 10"><circle cx="5" cy="5" r="4.9" fill="#1BA1E2"/><path d="M5 4.2 V8 M5 2 V3.3" stroke="#fff" stroke-width="1.5"/></svg>
<div class="t" style="left:281.5px;top:504.8px;letter-spacing:-0.12px">0 Messages</div>
<div class="sep" style="left:333px;top:503.4px;height:14px"></div>
<div class="a" style="left:339px;top:504px;width:103.6px;height:13.4px;background:#fff;border:0.6px solid #C5CBD9"></div>
<div class="t" style="left:342.4px;top:504.8px;letter-spacing:-0.1px">Build + IntelliSense</div>
<div class="dd" style="left:435.3px;top:509.8px"></div>
<div class="a" style="left:811px;top:503px;width:138.4px;height:14.3px;background:#fff;border:0.6px solid #C5CBD9"></div>
<div class="t" style="left:815px;top:504.4px;color:#7a7a7a;letter-spacing:-0.25px">Search Error List</div>
<svg style="left:930px;top:505.6px" width="8" height="8" viewBox="0 0 10 10"><circle cx="6.2" cy="3.8" r="2.9" stroke="#1e1e1e" stroke-width="1.3" fill="none"/><path d="M4.1 5.9 L0.8 9.2" stroke="#1e1e1e" stroke-width="1.7"/></svg>
<div class="dd" style="left:942px;top:509.2px;border-left-width:1.8px;border-right-width:1.8px;border-top-width:2.2px"></div>
<!-- header row -->
<div class="a" style="left:22px;top:519.8px;width:927.8px;height:18.8px;background:#fff;border-bottom:0.8px solid #E0E3EA"></div>
<div class="a hs" style="left:41.4px"></div><div class="a hs" style="left:59.4px"></div><div class="a hs" style="left:94.2px"></div><div class="a hs" style="left:771px"></div><div class="a hs" style="left:840px"></div><div class="a hs" style="left:910.5px"></div><div class="a hs" style="left:934.3px"></div>
<svg style="left:52.6px;top:522.6px" width="4" height="4" viewBox="0 0 4 4"><path d="M0.2 0.4 H3.6 V3.8 Z" fill="#555"/></svg>
<div class="t" style="left:62.6px;top:523.6px">Code</div>
<div class="t" style="left:97.8px;top:523.6px;letter-spacing:-0.06px">Description</div>
<div class="t" style="left:774.4px;top:523.6px">Project</div>
<div class="t" style="left:844px;top:523.6px">File</div>
<div class="t" style="left:913.8px;top:523.6px">Line</div>
<!-- bottom tabs -->
<div class="a" style="left:22px;top:603px;width:39.8px;height:14.4px;background:#fff"></div>
<div class="t" style="left:27px;top:604.3px;letter-spacing:-0.16px">Error List</div>
<div class="a" style="left:61.8px;top:603.4px;width:34.2px;height:14.4px;background:#4D6082"></div>
<div class="t w" style="left:66px;top:604.8px">Output</div>
<!-- STATUS BAR -->
<div class="a" style="left:0;top:622px;width:1000px;height:17.2px;background:#007ACC"></div>
<div class="t w" style="left:3px;top:625.4px;letter-spacing:-0.2px">Item(s) Saved</div>
<div class="t w" style="left:754px;top:625.4px;letter-spacing:-0.1px">Ln 10</div>
<div class="t w" style="left:817.6px;top:625.4px;letter-spacing:-0.05px">Col 26</div>
<div class="t w" style="left:881.6px;top:625.4px;letter-spacing:-0.1px">Ch 26</div>
<div class="t w" style="left:976.2px;top:625.4px;letter-spacing:-0.15px">INS</div>

<!-- TASKBAR -->
<div class="a" style="left:0;top:639.2px;width:1000px;height:27.8px;background:#1B1611"></div>
<div class="a" style="left:33px;top:639.2px;width:238.6px;height:27.8px;background:#343434"></div>
<svg style="left:10.8px;top:647.8px" width="11.4" height="10.8" viewBox="0 0 12 12"><path d="M0 1.7 L5 1 V5.7 H0 Z M5.8 0.9 L12 0 V5.7 H5.8 Z M0 6.4 H5 V11.1 L0 10.4 Z M5.8 6.4 H12 V12 L5.8 11.2 Z" fill="#fff"/></svg>
<svg style="left:39.6px;top:645.8px" width="15" height="15" viewBox="0 0 15 15"><circle cx="7.5" cy="7.5" r="6.5" fill="none" stroke="#fff" stroke-width="1.5"/></svg>
<div class="t" style="left:58.8px;top:648.2px;font-size:9.7px;color:#a6a5a4;letter-spacing:-0.1px">Ask me anything</div>
<svg style="left:254.4px;top:647.4px" width="6" height="11.4" viewBox="0 0 6 12"><rect x="1.6" y="0.5" width="2.8" height="6.6" rx="1.4" fill="#3c3c3c" stroke="#9a9a9a" stroke-width="0.75"/><path d="M0.4 5.4 V6.4 A2.6 2.6 0 0 0 5.6 6.4 V5.4 M3 9 V11 M1.4 11.2 H4.6" stroke="#9a9a9a" stroke-width="0.75" fill="none"/></svg>
<svg style="left:281.3px;top:648px" width="15.2" height="10" viewBox="0 0 15.2 10"><rect x="3.2" y="0.5" width="8.8" height="9" rx="0.8" fill="none" stroke="#c4c4c4" stroke-width="0.85"/><path d="M1.8 2 H0.5 V8 H1.8 M13.4 2 H14.7 V8 H13.4" fill="none" stroke="#c4c4c4" stroke-width="0.85"/></svg>
<!-- chrome -->
<svg style="left:316.8px;top:645.3px" width="15.4" height="15.4" viewBox="0 0 20 20"><circle cx="10" cy="10" r="10" fill="#DB4437"/><path d="M10 10 L1.34 5 A10 10 0 0 0 10 20 L14.3 12.5 Z" fill="#0F9D58"/><path d="M10 10 L10 20 A10 10 0 0 0 18.66 5 H10 Z" fill="#FFCD40"/><path d="M10 10 L18.66 5 A10 10 0 0 0 1.34 5 L5.7 12.5 Z" fill="#DB4437"/><circle cx="10" cy="10" r="4.6" fill="#f1f1f1"/><circle cx="10" cy="10" r="3.6" fill="#4285F4"/></svg>
<!-- firefox -->
<svg style="left:351.6px;top:645.3px" width="15.4" height="15.4" viewBox="0 0 20 20"><circle cx="10" cy="10" r="9.8" fill="#E55B0A"/><circle cx="10.6" cy="8.6" r="6.6" fill="#2A62B8"/><path d="M8 4 Q11 2.6 13.6 4.4 Q12 4.4 11.4 5.4 Q13.4 6.2 13 8 L10.4 8.4 Q9.6 9.8 8 9.4 Z" fill="#5C9BE0"/><path d="M0.6 8 Q0 15 6.6 18.8 Q13.6 21.4 18.4 15.4 Q20.6 11 18.6 6 Q18.4 10.6 15 13 Q11 15.2 8 12.4 Q9.8 12.2 10.6 10.8 L7.4 9.8 Q5.6 8.4 7 6.4 Q4.2 5.8 4.2 2.6 Q1.2 4.6 0.6 8 Z" fill="#FF9A0C"/><path d="M14.6 1.6 Q19 4.2 19.7 9 Q18.8 5.2 15.8 3.6 Z" fill="#FFD21E"/></svg>
<!-- blue app -->
<svg style="left:386px;top:645px" width="16" height="16" viewBox="0 0 16 16"><defs><linearGradient id="ba" x1="0" y1="0.2" x2="1" y2="0"><stop offset="0" stop-color="#6B3BE4"/><stop offset="0.45" stop-color="#5B4FE6"/><stop offset="0.55" stop-color="#2394EA"/><stop offset="1" stop-color="#1FA6EE"/></linearGradient></defs><rect x="0" y="0" width="16" height="16" rx="4.4" fill="url(#ba)"/><path d="M4.4 7.4 A3.8 3.8 0 0 1 11 5.6 M11.6 8.6 A3.8 3.8 0 0 1 5 10.4" stroke="#fff" stroke-width="1.9" fill="none"/><path d="M9.6 6.6 H12 V4.2 M6.4 9.4 H4 V11.8" fill="#fff" stroke="#fff" stroke-width="0.6"/></svg>
<!-- VS active -->
<div class="a" style="left:412px;top:639.2px;width:33.7px;height:27.8px;background:#474645"></div>
<svg style="left:420.8px;top:644.6px" width="16.6" height="17" viewBox="0 0 32 32"><path fill="#fff" stroke="#fff" stroke-width="2.4" stroke-linejoin="round" d="M23.5 1 L31 4.2 V27.8 L23.5 31 L11 19.4 L4.4 24.6 L1 23 V9 L4.4 7.4 L11 12.6 Z"/><path fill="#7A2DA8" d="M23.5 1 L31 4.2 V27.8 L23.5 31 L11 19.4 L4.4 24.6 L1 23 V9 L4.4 7.4 L11 12.6 Z M23.5 9.6 L15 16 L23.5 22.4 Z M4.6 11.8 V20.2 L9.8 16 Z"/></svg>
<!-- notepad -->
<svg style="left:455.4px;top:645.6px" width="15.4" height="15.4" viewBox="0 0 16 16"><path d="M1 1 H9.4 L12 3.6 V14.8 H1 Z" fill="#f4f4f0" stroke="#c9c9c2" stroke-width="0.5"/><path d="M1.4 7 Q4 4.6 6.4 6.4 Q9 8 11.6 5.6 V14.4 H1.4 Z" fill="#6CC43C"/><path d="M1.4 10.6 Q6 9 11.6 10.8 V14.4 H1.4 Z" fill="#3E9E2A"/><path d="M3 4 H8 M3 5.6 H6" stroke="#a8a8a0" stroke-width="0.7"/><path d="M15 0.6 L10.8 9.4 L10.4 11 L11.8 10 L16 1.2 Z" fill="#E8A33D" stroke="#5e3d0c" stroke-width="0.4"/></svg>
<div class="a ul" style="left:345px;width:28px"></div><div class="a ul" style="left:380px;width:28px"></div><div class="a ul" style="left:412px;width:33.7px"></div><div class="a ul" style="left:449.5px;width:28px"></div>
<!-- tray -->
<div class="a" style="left:773.7px;top:639.2px;width:11px;height:27.8px;background:#F0F0F0"></div>
<svg style="left:776.2px;top:644.2px" width="6" height="3.6" viewBox="0 0 6 3.6"><path d="M0.4 3.2 L3 0.6 L5.6 3.2" stroke="#333" stroke-width="0.9" fill="none"/></svg>
<svg style="left:776.2px;top:658.6px" width="6" height="3.6" viewBox="0 0 6 3.6"><path d="M0.4 0.4 L3 3 L5.6 0.4" stroke="#333" stroke-width="0.9" fill="none"/></svg>
<svg style="left:791.6px;top:650.4px" width="9" height="5" viewBox="0 0 9 5"><path d="M0.4 4.6 L4.5 0.6 L8.6 4.6" stroke="#e8e8e8" stroke-width="0.9" fill="none"/></svg>
<svg style="left:812.6px;top:648.4px" width="10.6" height="9.2" viewBox="0 0 11 9"><path d="M0.5 3.2 H2.4 L5 0.6 V8.4 L2.4 5.8 H0.5 Z" fill="none" stroke="#e8e8e8" stroke-width="0.8"/><path d="M6.6 3 Q7.6 4.5 6.6 6 M8 2 Q9.8 4.5 8 7" stroke="#bdbdbd" stroke-width="0.7" fill="none"/></svg>
<svg style="left:838.8px;top:648.6px" width="9.6" height="9" viewBox="0 0 10 9"><circle cx="2.6" cy="6.4" r="1.9" fill="none" stroke="#e0e0e0" stroke-width="0.9"/><circle cx="5" cy="4.2" r="1.9" fill="none" stroke="#e0e0e0" stroke-width="0.9"/><path d="M6.4 3 L9.2 0.6 M7.6 1.2 L9.2 2.6" stroke="#e0e0e0" stroke-width="0.8"/></svg>
<svg style="left:863.2px;top:648.2px" width="16.2" height="9.2" viewBox="0 0 16.2 9.2"><rect x="0.5" y="0.5" width="15.2" height="8.2" rx="0.8" fill="none" stroke="#d8d8d8" stroke-width="0.9"/><path d="M2.4 2.8 H13.8 M2.4 4.6 H13.8" stroke="#d8d8d8" stroke-width="0.7" stroke-dasharray="1 0.9"/><path d="M4.4 6.6 H11.8" stroke="#d8d8d8" stroke-width="0.7"/></svg>
<div class="t w" style="left:889.6px;top:647.2px;font-size:8px;letter-spacing:-0.3px">ENG</div>
<div class="t w" style="left:926.8px;top:640.6px;font-size:8.4px">21:54</div>
<div class="t w" style="left:914.8px;top:653.6px;font-size:8.4px">24/08/2016</div>
<svg style="left:971.2px;top:646.6px" width="15.8" height="16" viewBox="0 0 16 16"><path d="M0.6 0.6 H11.4 V8.4 H4.6 L2.4 10.6 V8.4 H0.6 Z" fill="#e6e6e6" stroke="#fff" stroke-width="0.6"/><path d="M2.4 3 H9.6 M2.4 5.4 H9.6" stroke="#9a9a9a" stroke-width="0.7"/><circle cx="10.8" cy="11.8" r="4" fill="#1B1611" stroke="#fff" stroke-width="0.8"/><text x="10.8" y="13.9" font-size="5.6" font-weight="bold" font-family="Liberation Sans, sans-serif" text-anchor="middle" fill="#fff">11</text></svg>
<div class="a" style="left:996.2px;top:639.2px;width:0.8px;height:27.8px;background:#6b6762"></div>

</body></html>
